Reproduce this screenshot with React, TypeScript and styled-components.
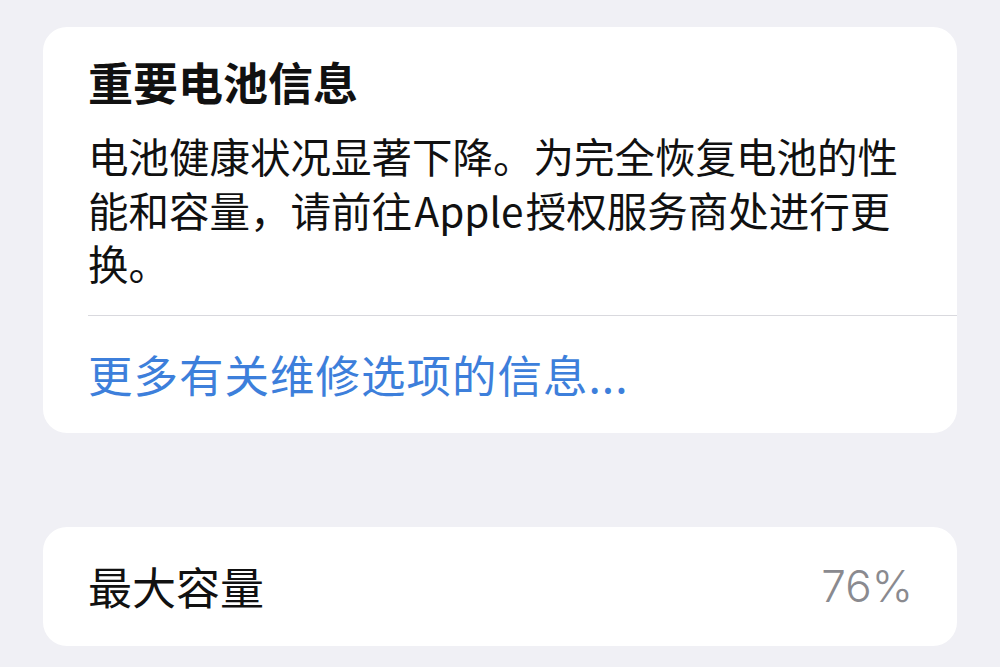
import React from "react";
import styled, { createGlobalStyle } from "styled-components";

const Global = createGlobalStyle`
  html, body {
    margin: 0;
    padding: 0;
    background: #f0f0f5;
  }
  body {
    font-family: "Noto Sans CJK SC", "Noto Sans", sans-serif;
    -webkit-font-smoothing: antialiased;
  }
`;

const Page = styled.div`
  width: 1000px;
  height: 667px;
  box-sizing: border-box;
  padding: 27px 43px 0 43px;
  display: flex;
  flex-direction: column;
  gap: 94px;
  overflow: hidden;
  background: #f0f0f5;
`;

const Card = styled.section`
  background: #ffffff;
  border-radius: 24px;
  padding-left: 45px;
  display: flex;
  flex-direction: column;
`;

const InfoBlock = styled.div`
  padding: 25px 45px 25px 0;
  border-bottom: 1.5px solid #d9d9de;
  display: flex;
  flex-direction: column;
  gap: 17px;
`;

const Title = styled.h1`
  margin: 0;
  font-size: 45px;
  line-height: 60px;
  font-weight: 700;
  color: #111;
`;

const Body = styled.p`
  margin: 0;
  font-size: 40.5px;
  line-height: 53.5px;
  font-weight: 400;
  color: #111;
`;

const LinkRow = styled.div`
  height: 117px;
  display: flex;
  align-items: center;
  box-sizing: border-box;
`;

const LinkText = styled.a`
  font-size: 44.5px;
  line-height: 56px;
  letter-spacing: 1px;
  color: #3d7fdb;
  text-decoration: none;
`;

const Row = styled.div`
  height: 119px;
  display: flex;
  align-items: center;
  justify-content: space-between;
  padding-right: 44px;
`;

const Label = styled.span`
  font-size: 44px;
  color: #111;
`;

const Value = styled.span<{ $muted?: boolean }>`
  font-family: "Inter", "Noto Sans", sans-serif;
  font-size: 44px;
  font-weight: 300;
  color: ${(p) => (p.$muted ? "#8a8a8f" : "#111")};
`;

export default function App() {
  return (
    <>
      <Global />
      <Page>
        <Card>
          <InfoBlock>
            <Title>重要电池信息</Title>
            <Body>
              电池健康状况显著下降。为完全恢复电池的性能和容量，请前往{"\u200A"}Apple{"\u200A"}授权服务商处进行更换。
            </Body>
          </InfoBlock>
          <LinkRow>
            <LinkText href="#">更多有关维修选项的信息...</LinkText>
          </LinkRow>
        </Card>
        <Card>
          <Row>
            <Label>最大容量</Label>
            <Value $muted>76%</Value>
          </Row>
        </Card>
      </Page>
    </>
  );
}
